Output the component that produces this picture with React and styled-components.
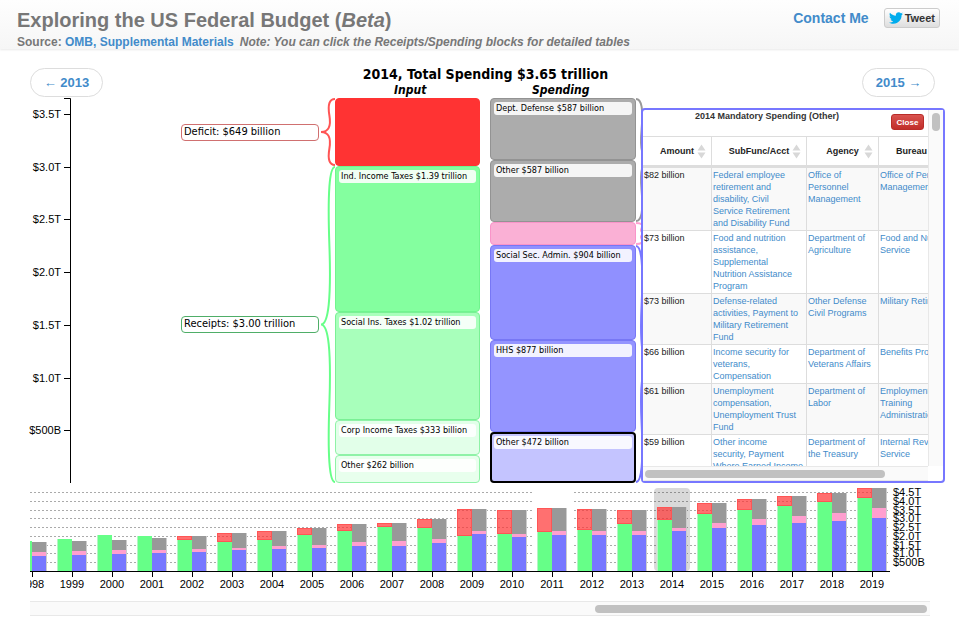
import React from "react";
import styled, { createGlobalStyle } from "styled-components";
import { FaTwitter } from "react-icons/fa";

const sans = `"Liberation Sans", Arial, sans-serif`;
const chartFont = `"DejaVu Sans Condensed", "DejaVu Sans", sans-serif`;
const linkBlue = "#428bca";

const GlobalStyle = createGlobalStyle`
  * {
    box-sizing: border-box;
  }

  body {
    margin: 0;
    background: #fff;
    color: #333;
    font-family: ${sans};
  }
`;

const Header = styled.header`
  display: flex;
  justify-content: space-between;
  height: 49px;
  padding: 8px 19px 0 17px;
  background: linear-gradient(#fefefe, #f6f6f6);
  box-shadow: 0 1px 2px #e9e9e9;
  color: #777;
`;

const Title = styled.h1`
  margin: 0;
  font-size: 20px;
  line-height: 24px;
`;

const Source = styled.p`
  margin: 2px 0 0;
  font-size: 12px;
  font-weight: bold;
  line-height: 16px;
`;

const Link = styled.a`
  color: ${linkBlue};
  text-decoration: none;
`;

const Note = styled.em`
  margin-left: 6px;
`;

const HeaderActions = styled.div`
  display: flex;
  align-items: flex-start;
  gap: 15px;
`;

const ContactLink = styled(Link)`
  font-size: 14px;
  font-weight: bold;
  line-height: 20px;
`;

const TweetButton = styled.button`
  display: flex;
  align-items: center;
  gap: 2px;
  height: 20px;
  padding: 0 4px;
  border: 1px solid #ccc;
  border-radius: 3px;
  background: linear-gradient(#fff, #dedede);
  color: #333;
  font: bold 11px ${sans};
  white-space: nowrap;

  svg {
    color: #00aced;
  }
`;

const Main = styled.main`
  padding: 19px 14px 0 30px;
`;

const Stage = styled.section`
  display: grid;
  grid-template-columns: 41px minmax(154px, 1fr) 145px 10px 146px 5px 304px;
  grid-template-rows: 30px 385px;
`;

const YearButton = styled.button`
  grid-column: ${({ $next }) => ($next ? "7" : "1 / span 2")};
  grid-row: 1;
  justify-self: ${({ $next }) => ($next ? "end" : "start")};
  width: 73px;
  height: 29px;
  margin-right: ${({ $next }) => ($next ? "10px" : "0")};
  padding: 0;
  border: 1px solid #ddd;
  border-radius: 15px;
  background: #fff;
  color: ${linkBlue};
  font: bold 13px ${sans};
`;

const StageTitle = styled.div`
  grid-column: 3 / span 3;
  grid-row: 1;
  display: grid;
  grid-template-columns: 1fr 1fr;
  color: #000;
  font-family: ${chartFont};
  font-weight: bold;
  text-align: center;
`;

const StageHeading = styled.h2`
  grid-column: 1 / -1;
  justify-self: center;
  margin: -2px 0 0;
  font-size: 14px;
  line-height: 16px;
  white-space: nowrap;
`;

const ColumnHeading = styled.em`
  font-size: 12px;
  line-height: 16px;
`;

const AxisDrawing = styled.svg`
  grid-column: 1;
  grid-row: 2;
  overflow: visible;
  font: 11px ${sans};
`;

const Totals = styled.div`
  grid-column: 2;
  grid-row: 2;
`;

const TotalGroup = styled.div`
  display: flex;
  align-items: center;
  justify-content: flex-end;
  gap: 2px;
  height: ${({ $height }) => $height}px;
`;

const TotalTag = styled.div`
  width: 138px;
  height: 17px;
  padding: 0 2px;
  border: 1px solid ${({ $color }) => $color};
  border-radius: 4px;
  color: #000;
  font: 11px/14px ${chartFont};
  white-space: nowrap;
`;

const Brace = styled.svg`
  display: block;
  flex: none;
  overflow: visible;
`;

const Stack = styled.div`
  grid-column: ${({ $column }) => $column};
  grid-row: 2;
  display: flex;
  flex-direction: column;
`;

const Block = styled.button`
  display: flex;
  flex-direction: column;
  justify-content: flex-start;
  align-items: stretch;
  width: 100%;
  height: ${({ $height }) => $height}px;
  padding: ${({ $selected }) => ($selected ? "2px" : "3px")};
  border: ${({ $selected }) => ($selected ? "2px" : "1px")} solid
    ${({ $stroke }) => $stroke};
  border-radius: 4px;
  background: ${({ $fill }) => $fill};
  text-align: left;
`;

const BlockLabel = styled.span`
  display: block;
  height: 13px;
  padding-left: 2px;
  border-radius: 3px;
  background: rgba(255, 255, 255, 0.88);
  color: #000;
  font: 9px/12px ${chartFont};
  white-space: nowrap;
`;

const Panel = styled.aside`
  position: relative;
  grid-column: 7;
  grid-row: 2;
  display: grid;
  grid-template-columns: minmax(0, 1fr) 15px;
  grid-template-rows: minmax(0, 1fr) 15px;
  margin-top: 10px;
  border: 2px solid #7777ff;
  border-radius: 4px;
  background: #fff;
`;

const PanelBody = styled.div`
  overflow: hidden;
`;

const PanelTop = styled.div`
  display: flex;
  height: 26px;
  padding-right: 4px;
`;

const PanelTitle = styled.h3`
  flex: 1;
  margin: 0;
  font-size: 9px;
  line-height: 12px;
  text-align: center;
`;

const CloseButton = styled.button`
  width: 33px;
  height: 16px;
  margin-top: 4px;
  padding: 0;
  border: 1px solid #b92c28;
  border-radius: 3px;
  background: linear-gradient(#d9534f, #c12e2a);
  color: #fff;
  font: bold 8px ${sans};
`;

const DataTable = styled.table`
  width: 320px;
  table-layout: fixed;
  border-collapse: separate;
  border-spacing: 0;
  font-size: 9px;
  line-height: 12px;
`;

const HeadCell = styled.th`
  position: relative;
  width: ${({ $width }) => $width};
  height: 32px;
  padding: 0 ${({ $sort }) => ($sort ? "0" : "18px")} 1px 0;
  border-top: 1px solid #ddd;
  border-right: 1px solid #ddd;
  border-bottom: 3px solid #ddd;
  color: #222;
  text-align: center;
`;

const SortIcon = styled.svg`
  position: absolute;
  top: 7px;
  right: 5px;
`;

const Row = styled.tr`
  background: ${({ $striped }) => ($striped ? "#f9f9f9" : "#fff")};
`;

const Cell = styled.td`
  padding: 1px;
  border-right: 1px solid #ddd;
  border-bottom: 1px solid #ddd;
  color: #222;
  vertical-align: top;
`;

const CellLink = styled(Link)`
  display: block;
  white-space: pre;
`;

const Track = styled.div`
  display: flex;
  align-items: ${({ $vertical }) => ($vertical ? "flex-start" : "center")};
  justify-content: ${({ $vertical, $end }) =>
    $vertical ? "center" : $end ? "flex-end" : "flex-start"};
  height: ${({ $vertical }) => ($vertical ? "auto" : "15px")};
  padding: ${({ $vertical }) => ($vertical ? "3px 0" : "0 3px 0 2px")};
  border: solid #e8e8e8;
  border-width: ${({ $vertical }) => ($vertical ? "0 0 0 1px" : "1px 0")};
  background: #fafafa;
`;

const Thumb = styled.div`
  width: ${({ $width }) => $width};
  height: ${({ $height }) => $height}px;
  border-radius: 4px;
  background: #c1c1c1;
`;

const Timeline = styled.section`
  margin: 5px 15px 0 0;
`;

const TimelineDrawing = styled.svg`
  display: block;
  width: 900px;
  height: 113px;
  font: 11px ${sans};
`;

const receipts = [
  { label: "Ind. Income Taxes $1.39 trillion", height: 146, fill: "#84ff9f", stroke: "#70f58e" },
  { label: "Social Ins. Taxes $1.02 trillion", height: 108, fill: "#a8ffbb", stroke: "#7af095" },
  { label: "Corp Income Taxes $333 billion", height: 35, fill: "#e2ffe9", stroke: "#8ff2a7" },
  { label: "Other $262 billion", height: 28, fill: "#e8ffed", stroke: "#8ff2a7" }
];

const spending = [
  { label: "Dept. Defense $587 billion", height: 62, fill: "#acacac", stroke: "#939393" },
  { label: "Other $587 billion", height: 62, fill: "#acacac", stroke: "#939393" },
  { label: "", height: 23, fill: "#fab0d5", stroke: "#f994c9" },
  { label: "Social Sec. Admin. $904 billion", height: 95, fill: "#9090ff", stroke: "#7777f5" },
  { label: "HHS $877 billion", height: 92, fill: "#9494ff", stroke: "#7777f5" },
  { label: "Other $472 billion", height: 51, fill: "#c4c4ff", stroke: "#000", selected: true }
];

const axisTicks = [
  ["$3.5T", 16],
  ["$3.0T", 69],
  ["$2.5T", 121],
  ["$2.0T", 174],
  ["$1.5T", 227],
  ["$1.0T", 280],
  ["$500B", 332]
];

const rows = [
  ["$82 billion", "Federal employee\nretirement and\ndisability, Civil\nService Retirement\nand Disability Fund", "Office of\nPersonnel\nManagement", "Office of Personnel\nManagement"],
  ["$73 billion", "Food and nutrition\nassistance,\nSupplemental\nNutrition Assistance\nProgram", "Department of\nAgriculture", "Food and Nutrition\nService"],
  ["$73 billion", "Defense-related\nactivities, Payment to\nMilitary Retirement\nFund", "Other Defense\nCivil Programs", "Military Retirement"],
  ["$66 billion", "Income security for\nveterans,\nCompensation", "Department of\nVeterans Affairs", "Benefits Programs"],
  ["$61 billion", "Unemployment\ncompensation,\nUnemployment Trust\nFund", "Department of\nLabor", "Employment and\nTraining\nAdministration"],
  ["$59 billion", "Other income\nsecurity, Payment\nWhere Earned Income", "Department of\nthe Treasury", "Internal Revenue\nService"]
];

// year, receipts, total, top of interest, top of mandatory
const years = [
  [1998, 30, 29, 19, 15],
  [1999, 32, 30, 20, 16],
  [2000, 36, 31, 21, 17],
  [2001, 35, 33, 21, 18],
  [2002, 32, 35, 22, 19],
  [2003, 30, 38, 23, 21],
  [2004, 32, 40, 25, 22],
  [2005, 37, 43, 26, 23],
  [2006, 41, 47, 29, 25],
  [2007, 45, 48, 30, 25],
  [2008, 44, 52, 32, 28],
  [2009, 36, 62, 40, 37],
  [2010, 38, 61, 37, 34],
  [2011, 40, 63, 40, 36],
  [2012, 42, 62, 40, 36],
  [2013, 48, 61, 40, 36],
  [2014, 52, 64, 43, 40],
  [2015, 58, 68, 48, 43],
  [2016, 62, 72, 52, 46],
  [2017, 66, 75, 55, 48],
  [2018, 70, 78, 58, 50],
  [2019, 74, 83, 63, 53]
];

const gridLines = [
  ["$4.5T", 4],
  ["$4.0T", 13],
  ["$3.5T", 22],
  ["$3.0T", 30],
  ["$2.5T", 39],
  ["$2.0T", 48],
  ["$1.5T", 57],
  ["$1.0T", 65],
  ["$500B", 74]
];

const CurlyBrace = ({ height, color, right }) => {
  const x = n => (right ? n : 14 - n);
  const h = height - 2;
  const d =
    `M${x(0)} 1 Q${x(8.4)} 1 ${x(5.6)} ${1 + h / 4} T${x(14)} ${1 + h / 2} ` +
    `M${x(0)} ${1 + h} Q${x(8.4)} ${1 + h} ${x(5.6)} ${1 + h * 0.75} T${x(14)} ${1 + h / 2}`;
  return (
    <Brace width={right ? 5 : 14} height={height} aria-hidden="true">
      <path d={d} fill="none" stroke={color} strokeWidth="2" />
    </Brace>
  );
};

const Axis = () => (
  <AxisDrawing width="41" height="385">
    <path d="M34 0.5H40.5V385" fill="none" stroke="#000" />
    {axisTicks.map(([label, y]) => (
      <g key={label}>
        <path d={`M34 ${y + 0.5}H40`} stroke="#000" />
        <text x="31" y={y + 4} textAnchor="end">
          {label}
        </text>
      </g>
    ))}
  </AxisDrawing>
);

const Blocks = ({ items }) =>
  items.map(({ label, height, fill, stroke, selected }, i) => (
    <Block
      key={i}
      $height={height}
      $fill={fill}
      $stroke={stroke}
      $selected={selected}
      aria-label={label || "Net interest"}
    >
      {label && <BlockLabel>{label}</BlockLabel>}
    </Block>
  ));

const Sorter = () => (
  <SortIcon width="9" height="15" aria-hidden="true">
    <path d="M0.5 6.5L4.5 0.5L8.5 6.5ZM0.5 8.5L4.5 14.5L8.5 8.5Z" fill="#d8d8d8" />
  </SortIcon>
);

const DetailPanel = () => (
  <Panel>
    <PanelBody>
      <PanelTop>
        <PanelTitle>2014 Mandatory Spending (Other)</PanelTitle>
        <CloseButton>Close</CloseButton>
      </PanelTop>
      <DataTable>
        <thead>
          <tr>
            <HeadCell $width="69px" $sort>Amount<Sorter /></HeadCell>
            <HeadCell $width="95px" $sort>SubFunc/Acct<Sorter /></HeadCell>
            <HeadCell $width="72px" $sort>Agency<Sorter /></HeadCell>
            <HeadCell $width="84px">Bureau</HeadCell>
          </tr>
        </thead>
        <tbody>
          {rows.map(([amount, ...links], i) => (
            <Row key={i} $striped={i % 2 === 0}>
              <Cell>{amount}</Cell>
              {links.map(text => (
                <Cell key={text}>
                  <CellLink href="#">{text}</CellLink>
                </Cell>
              ))}
            </Row>
          ))}
        </tbody>
      </DataTable>
    </PanelBody>
    <Track $vertical>
      <Thumb $width="8px" $height={18} />
    </Track>
    <Track>
      <Thumb $width="240px" $height={8} />
    </Track>
  </Panel>
);

const YearBars = ({ data, index }) => {
  const [year, income, total, interest, mandatory] = data;
  const x = 2 + index * 40;
  const base = 83;
  return (
    <g>
      <rect x={x - 14} y={base - income} width="14" height={income} fill="#66ff88" />
      <rect x={x} y={base - total} width="14" height={total - interest} fill="#999" />
      <rect x={x} y={base - interest} width="14" height={interest - mandatory} fill="#ff9fcf" />
      <rect x={x} y={base - mandatory} width="14" height={mandatory} fill="#7777ff" />
      <path d={`M${x + 14.5} ${base - total}V${base}`} stroke="#ccc" />
      <path d={`M${x - 14.5} ${base - income}V${base}`} stroke="#b4f7c3" />
      {total > income && (
        <rect
          x={x - 14.5}
          y={base - total + 0.5}
          width="14"
          height={total - income}
          fill="rgba(255, 51, 51, 0.7)"
          stroke="#f55"
        />
      )}
      <path d={`M${x + 0.5} ${base}v6`} stroke="#000" />
      <text x={x} y="100" textAnchor="middle">
        {year}
      </text>
    </g>
  );
};

const TimelineChart = () => (
  <TimelineDrawing>
    {gridLines.map(([label, y]) => (
      <g key={label}>
        <path d={`M0 ${y + 0.5}H860`} stroke="#aaa" strokeDasharray="2 2" />
        <text x="863" y={y + 4}>
          {label}
        </text>
      </g>
    ))}
    <rect x="502" width="42" height="83" fill="#fff" />
    <rect x="624" width="36" height="83" rx="4" fill="#000" fillOpacity="0.15" />
    {years.map((data, i) => (
      <YearBars key={data[0]} data={data} index={i} />
    ))}
    <path d="M0 83.5H860" stroke="#000" />
  </TimelineDrawing>
);

const App = () => {
  return (
    <>
      <GlobalStyle />
      <Header>
        <div>
          <Title>
            Exploring the US Federal Budget (<em>Beta</em>)
          </Title>
          <Source>
            Source: <Link href="#">OMB, Supplemental Materials</Link>
            <Note>
              Note: You can click the Receipts/Spending blocks for detailed tables
            </Note>
          </Source>
        </div>
        <HeaderActions>
          <ContactLink href="#">Contact Me</ContactLink>
          <TweetButton>
            <FaTwitter size={14} />
            Tweet
          </TweetButton>
        </HeaderActions>
      </Header>
      <Main>
        <Stage>
          <YearButton>← 2013</YearButton>
          <StageTitle>
            <StageHeading>2014, Total Spending $3.65 trillion</StageHeading>
            <ColumnHeading>Input</ColumnHeading>
            <ColumnHeading>Spending</ColumnHeading>
          </StageTitle>
          <YearButton $next>2015 →</YearButton>
          <Axis />
          <Totals>
            <TotalGroup $height={68}>
              <TotalTag $color="#d07070">Deficit: $649 billion</TotalTag>
              <CurlyBrace height={68} color="#ff5555" />
            </TotalGroup>
            <TotalGroup $height={317}>
              <TotalTag $color="#4fae68">Receipts: $3.00 trillion</TotalTag>
              <CurlyBrace height={317} color="#66ff88" />
            </TotalGroup>
          </Totals>
          <Stack $column={3}>
            <Block $height={68} $fill="#ff3333" $stroke="#ff3333" aria-label="Deficit" />
            <Blocks items={receipts} />
          </Stack>
          <Stack $column={5}>
            <Blocks items={spending} />
          </Stack>
          <Stack $column={6}>
            <CurlyBrace height={124} color="#999" right />
            <CurlyBrace height={23} color="#ff9fcf" right />
            <CurlyBrace height={238} color="#7777ff" right />
          </Stack>
          <DetailPanel />
        </Stage>
        <Timeline>
          <TimelineChart />
          <Track $end>
            <Thumb $width="332px" $height={8} />
          </Track>
        </Timeline>
      </Main>
    </>
  );
};

export default App;
